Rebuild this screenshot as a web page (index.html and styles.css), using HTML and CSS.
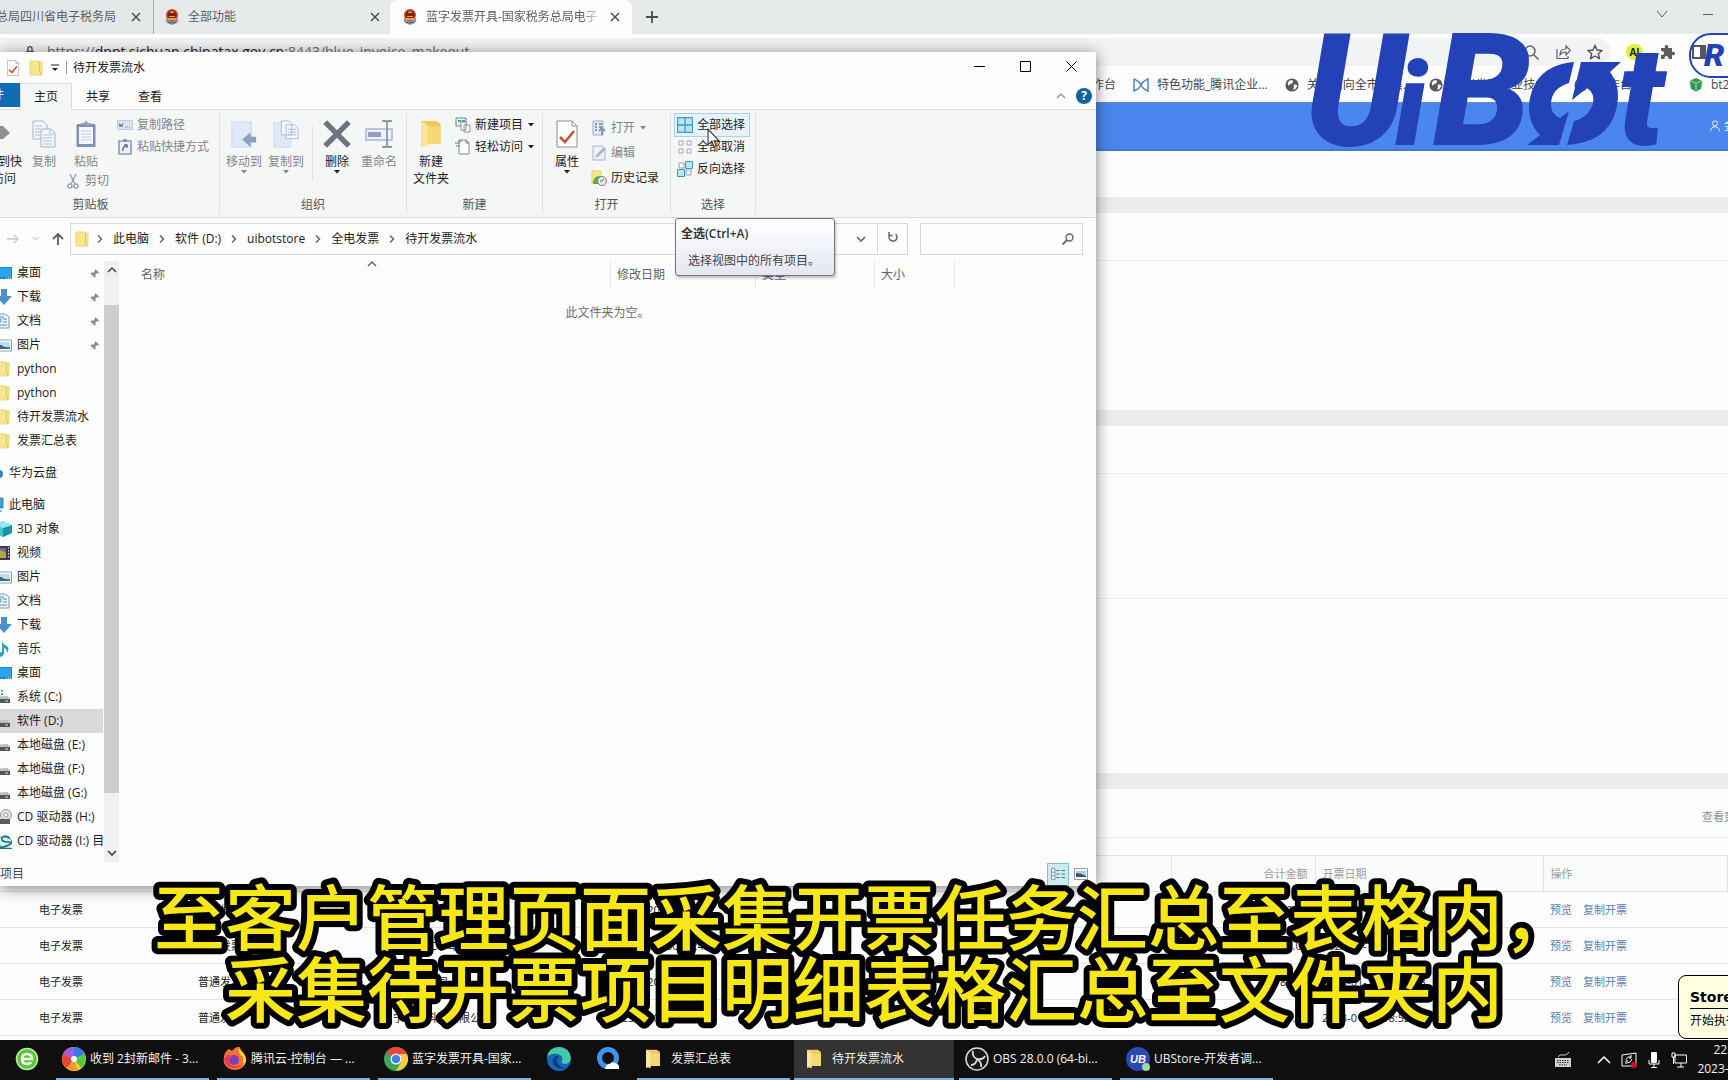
FILE: index.html
```html
<!DOCTYPE html>
<html lang="zh-CN">
<head>
  <meta charset="UTF-8" />
  <meta name="viewport" content="width=device-width, initial-scale=1.0"/>
  <title>蓝字发票开具</title>
  <link rel="stylesheet" href="styles.css">
</head>
<body>

  <!-- shared icons -->
  <svg class="sprite" aria-hidden="true">
    <symbol id="x" viewBox="0 0 10 10"><path d="M1 1l8 8M9 1L1 9" fill="none" stroke="currentColor" stroke-width="1.4"/></symbol>
    <symbol id="chev-r" viewBox="0 0 10 10"><path d="M3 1.5L6.5 5L3 8.500" fill="none" stroke="currentColor" stroke-width="1.5"/></symbol>
    <symbol id="chev-d" viewBox="0 0 10 10"><path d="M1 3l4 4l4-4" fill="none" stroke="currentColor" stroke-width="1.700"/></symbol>
    <symbol id="chev-u" viewBox="0 0 10 10"><path d="M1 7l4-4l4 4" fill="none" stroke="currentColor" stroke-width="1.500"/></symbol>
    <symbol id="tri" viewBox="0 0 6 4"><path d="M0 0h6L3 3.500z" fill="currentColor"/></symbol>
    <symbol id="emblem" viewBox="0 0 16 18">
      <path d="M2 10q-1 3 1 5l5 2l5-2q2-2 1-5z" fill="#8a97b0"/>
      <circle cx="8" cy="7" r="6" fill="#c9442c"/><circle cx="8" cy="7" r="4.500" fill="#7e1f1a"/>
      <path d="M3 10h10l-1 2H4zM5 8h6v1H5zM6 4l2-1l2 1v1H6z" fill="#f0a13c"/>
      <path d="M4 14l4 1l4-1" stroke="#4a5878" fill="none"/>
    </symbol>
    <symbol id="folder" viewBox="0 0 14 16">
      <path d="M1 1h9v1h3v13H1z" fill="#f8e58f" stroke="#e6cf72" stroke-width=".8"/>
      <path d="M10.500 2v9l1.500 4" fill="none" stroke="#e0c45c" stroke-width="1"/>
    </symbol>
    <symbol id="folder-open" viewBox="0 0 20 26">
      <path d="M1 1h14l4 3v18H6L1 25z" fill="#efc95b"/><path d="M1 1l6 4v20l-6-2z" fill="#fbe69a"/><path d="M7 6h12v16H7z" fill="#f6d977"/>
    </symbol>
    <symbol id="pages" viewBox="0 0 24 28">
      <g fill="#f1f5fc" stroke="#a4b3d2"><path d="M1 1h10l4 4v14H1z"/><path d="M9 9h10l4 4v14H9z"/></g>
      <path d="M3 6h7M3 9h5M3 12h5M3 15h5M11 15h9M11 18h9M11 21h9M11 24h9M18 9v5h5" stroke="#b6c3de" fill="none"/>
    </symbol>
    <symbol id="clip" viewBox="0 0 22 28">
      <rect x="1.500" y="4" width="19" height="23" rx="1" fill="#8190b6"/><path d="M4 7h14v17H4z" fill="#f4f7fd"/>
      <path d="M6 5h10V3h-3q-2-4-4 0H6z" fill="#9aa5bd"/><path d="M6 11h10M6 14h10M6 17h10M6 20h10" stroke="#c0cbe2"/>
    </symbol>
    <symbol id="scissors" viewBox="0 0 12 16">
      <path d="M3 1l5 10M9 1L4 11" stroke="#98a2b2" stroke-width="1.500"/><circle cx="3" cy="13" r="2" fill="none" stroke="#98a2b2" stroke-width="1.500"/><circle cx="9" cy="13" r="2" fill="none" stroke="#98a2b2" stroke-width="1.500"/>
    </symbol>
    <symbol id="path" viewBox="0 0 16 12"><path d="M.5 1.500h15v9H.5z" fill="#dde4f1" stroke="#c0c9da"/><path d="M2 4l1 4l1-3l1 3l1-4M8 8h1M10 8h1M12 8h1" fill="none" stroke="#7684a0"/></symbol>
    <symbol id="shortcut" viewBox="0 0 14 16"><path d="M1 2h12v13H1z" fill="#edf2fa" stroke="#8a98b6" stroke-width="1.600"/><path d="M5 0h4v3H5z" fill="#8a98b6"/><path d="M5 12q-1-4 3-5M6 6h3v3" stroke="#5e7398" stroke-width="1.500" fill="none"/></symbol>
    <symbol id="move" viewBox="0 0 28 30"><path d="M1 2h21v27H1z" fill="#dfe9fa" stroke="#cbd8ef"/><path d="M12 21l9-8v5h6v6h-6v5z" fill="#8f9fc0"/></symbol>
    <symbol id="copyto" viewBox="0 0 28 30"><path d="M1 3h18v26H1z" fill="#dfe9fa" stroke="#cbd8ef"/><path d="M9 1h8l3 3v12H9zM14 5h9l4 4v11H14z" fill="#f3f7fe" stroke="#a9b8d6"/><path d="M16 10h9M16 13h9M16 16h9" stroke="#a9b8d6"/></symbol>
    <symbol id="del" viewBox="0 0 26 26"><path d="M2 2l22 22M24 2L2 24" stroke="#6c7482" stroke-width="5"/></symbol>
    <symbol id="rename" viewBox="0 0 28 28"><path d="M1 9h26v11H1z" fill="#eef3fb" stroke="#a9b7d4" stroke-width="1.500"/><path d="M3 12h13v5H3z" fill="#8fa0c2"/><path d="M17 1h4l1 2l1-2h4M22 2v24M17 27h4l1-2l1 2h4" fill="none" stroke="#8d98ab" stroke-width="1.800"/></symbol>
    <symbol id="newitem" viewBox="0 0 16 16"><path d="M1 1h10v8H1z" fill="#e8f4f2" stroke="#5b8f8d"/><path d="M3 3h3v2H3zM7 3h3v2H7z" fill="#5b8f8d"/><path d="M6 5h5v8H6zM9 8h6v7H9z" fill="#fff" stroke="#8a8f98"/></symbol>
    <symbol id="easy" viewBox="0 0 16 16"><path d="M4 1h7l3 3v11H4z" fill="#fbfcfe" stroke="#848b96"/><path d="M0 4h5M1 7h4M3 2h4M11 1v3h3" stroke="#5678a2" fill="none"/></symbol>
    <symbol id="props" viewBox="0 0 22 28"><path d="M1 1h15l5 5v21H1z" fill="#fff" stroke="#8b8f96"/><path d="M16 1v5h5" fill="none" stroke="#8b8f96"/><path d="M4 17l5 5l9-11" stroke="#c6553b" stroke-width="2.600" fill="none"/></symbol>
    <symbol id="openi" viewBox="0 0 14 16"><path d="M1 1h10v14H1z" fill="#e3eaf6" stroke="#9aa9c6"/><path d="M3 4h2M3 7h2M3 10h2M7 4h3M7 7h3" stroke="#8797b8" stroke-width="2"/><path d="M10 15V9M7 11l3-3l3 3" stroke="#8797b8" fill="none" stroke-width="2"/></symbol>
    <symbol id="edit" viewBox="0 0 14 16"><path d="M1 1h9l3 3v11H1z" fill="#eef2f9" stroke="#a8b3c9"/><path d="M3 13l2-4l7-7l2 2l-7 7z" fill="#a5b4d1"/></symbol>
    <symbol id="history" viewBox="0 0 16 16"><path d="M1 1h9v12H1z" fill="#f4e98a" stroke="#e3d35c"/><path d="M2 14q0-9 8-8v8z" fill="#5aab4a"/><circle cx="11" cy="11" r="4.500" fill="#e6e9e6" stroke="#7b827c"/><path d="M11 11l2-2M11 11h-2" fill="none" stroke="#666"/></symbol>
    <symbol id="selall" viewBox="0 0 16 16"><path d="M.5.5h15v15H.5zM8 0v16M0 8h16" fill="#b8e6f7" stroke="#4e94bd" stroke-width="1.300"/></symbol>
    <symbol id="selnone" viewBox="0 0 16 16"><path d="M2 2h4v4H2zM10 2h4v4h-4zM2 10h4v4H2zM10 10h4v4h-4z" fill="#fff" stroke="#a3a8ad"/></symbol>
    <symbol id="selinv" viewBox="0 0 16 16"><path d="M2 2h5v5H2zM9 9h5v5H9z" fill="#fff" stroke="#8fa2b0"/><path d="M8.500.5h7v7h-7zM.5 8.500h7v7h-7z" fill="#b8e6f7" stroke="#4e94bd"/></symbol>
    <symbol id="desk" viewBox="0 0 18 16"><path d="M0 2h18v12H0z" fill="#1d8bd0"/><path d="M1 3h16v9H1z" fill="#29a5ee"/><path d="M12 13h1M14 13h1M16 13h1" stroke="#fff"/></symbol>
    <symbol id="down" viewBox="0 0 18 16"><path d="M7 0h6v7h5l-8 9l-8-9h5z" fill="#4a90cc"/></symbol>
    <symbol id="doc" viewBox="0 0 18 16"><path d="M1 1h10l4 3v11H1z" fill="#f5fafd" stroke="#7897ad"/><path d="M3 6h4v3H3zM9 6h4M9 9h4M3 12h10M6 4h4" stroke="#3f8fb5" fill="none"/></symbol>
    <symbol id="pic" viewBox="0 0 18 16"><path d="M.5 3h17v11H.5z" fill="#fff" stroke="#8aa0b2"/><path d="M2 5h14v7H2z" fill="#b9dcf2"/><path d="M2 8q4-1 7 1t7 1v2H2z" fill="#41667a"/></symbol>
    <symbol id="cube" viewBox="0 0 18 16"><path d="M0 4l9-4l9 4v8l-9 4l-9-4z" fill="#3ec6d2"/><path d="M9 7l9-3v8l-9 4z" fill="#1797a6"/><path d="M0 4l9-4l9 4l-9 3z" fill="#9be6ea"/></symbol>
    <symbol id="film" viewBox="0 0 18 16"><path d="M0 1h16v14H0z" fill="#3c3b48"/><path d="M1 3h11v10H1z" fill="#69689e"/><path d="M2 9l5-4l5 3v5H2z" fill="#b0a84e"/><path d="M14.500 2v12" stroke="#ddd" stroke-dasharray="1.500"/></symbol>
    <symbol id="music" viewBox="0 0 18 16"><path d="M8 0q1 4 5 5q3 3 0 7q0-4-3-5v6q-1 3-5 3q-3-1-1-4q2-1 4-1z" fill="#2d9fc4"/></symbol>
    <symbol id="drive" viewBox="0 0 18 16"><path d="M0 8l14-1l2 3v4H0z" fill="#bdbdbd"/><path d="M0 10h16v4H0z" fill="#54565a"/><path d="M11 12h3" stroke="#cfe8cf"/></symbol>
    <symbol id="sysdrive" viewBox="0 0 18 16"><path d="M4 1h2v2H4zM7 1h2v2H7zM4 4h2v2H4zM7 4h2v2H7z" fill="#47b7b0"/><path d="M0 8l14-1l2 3v4H0z" fill="#bdbdbd"/><path d="M0 10h16v4H0z" fill="#54565a"/><path d="M11 12h3" stroke="#b6e8b6"/></symbol>
    <symbol id="cd" viewBox="0 0 18 16"><circle cx="12" cy="6" r="5.500" fill="#e0e0e0" stroke="#9b9b9b"/><circle cx="12" cy="6" r="2" fill="#fff" stroke="#9b9b9b"/><path d="M0 10h16v5H0z" fill="#5a5c60"/></symbol>
    <symbol id="cd2" viewBox="0 0 18 16"><ellipse cx="9" cy="9" rx="9" ry="5" fill="#cfeeed" stroke="#398e95"/><path d="M16 5q-7-4-8 0t6 4t-2 4t-6-1M0 15.500h18" fill="none" stroke="#1b7480" stroke-width="1.600"/></symbol>
    <symbol id="pc" viewBox="0 0 10 16"><path d="M0 1h9v10H0z" fill="#35a4e4" stroke="#5a7890"/><path d="M0 14h8" stroke="#5aa8d8" stroke-width="1.500"/></symbol>
    <symbol id="cloud" viewBox="0 0 10 16"><circle cx="5" cy="9" r="4" fill="#2f7fd0"/></symbol>
    <symbol id="pin" viewBox="0 0 12 12"><path d="M7 1l4 4l-1 1l-1-.5l-2 2l.3 2L6 10.500L4 8.200L.8 11.300L3.600 7.800L1.400 6l1-1.200l2 .3l2-2z" fill="#8b9097"/></symbol>
    <symbol id="globe" viewBox="0 0 16 16"><circle cx="8" cy="8" r="7.500" fill="#55585c"/><path d="M3 5q4-4 6-2q1 2-1 3t-4 3zM10 7q4 0 4 2q-2 5-5 4q2-2 1-4z" fill="#f4f4f4"/></symbol>
  </svg>

  <div class="desktop">

    <!-- browser -->
    <main class="browser">
      <div class="tabs">
        <div class="tab tab-first"><span>总局四川省电子税务局</span><svg class="i10"><use href="#x"/></svg></div>
        <div class="tab tab-mid"><svg class="emblem"><use href="#emblem"/></svg><span>全部功能</span><svg class="i10"><use href="#x"/></svg></div>
        <div class="tab tab-on"><svg class="emblem"><use href="#emblem"/></svg><span class="fade">蓝字发票开具-国家税务总局电子</span><svg class="i10"><use href="#x"/></svg></div>
        <button class="newtab" aria-label="新标签页"><svg viewBox="0 0 12 12"><path d="M6 0v12M0 6h12" stroke="#4a4d50" stroke-width="1.800"/></svg></button>
        <div class="wincaps">
          <svg class="i12" viewBox="0 0 12 12"><path d="M1 3l5 6l5-6" fill="none" stroke="currentColor"/></svg>
          <svg class="i12" viewBox="0 0 12 12"><path d="M1 6.500h10" stroke="currentColor"/></svg>
        </div>
      </div>
      <div class="toolbar">
        <div class="omnibox">
          <svg class="i14" viewBox="0 0 14 14"><path d="M3 6h8v8H3z" fill="#55585c"/><path d="M5 6V3q2-3 4 0v3" fill="none" stroke="#55585c" stroke-width="1.500"/></svg>
          <span class="url">https://<b>dppt.sichuan.chinatax.gov.cn</b>:8443/blue_invoice_makeout</span>
          <div class="omni-icons">
            <svg viewBox="0 0 16 16"><circle cx="7" cy="7" r="5" fill="none" stroke="#5f6368" stroke-width="1.500"/><path d="M10.500 10.500l5 5" stroke="#5f6368" stroke-width="1.500"/></svg>
            <svg viewBox="0 0 16 16"><path d="M2 5v9.500h11V12M5 11q0-6 6-6V2l4.500 4.500L11 11V8q-4 0-6 3z" fill="none" stroke="#5f6368" stroke-width="1.200"/></svg>
            <svg viewBox="0 0 16 16"><path d="M8 1.500l2 4.500l5 .5l-3.700 3.200l1.100 4.800L8 12l-4.400 2.500l1.100-4.800L1 6.500L6 6z" fill="none" stroke="#4e5155" stroke-width="1.400"/></svg>
          </div>
        </div>
        <div class="ext">
          <span class="ai">AI</span>
          <svg viewBox="0 0 16 16"><path d="M2 4h4q-1-3 1.500-3T9 4h4v4q3-1 3 1.500T13 11v4H9.500q0-3-2-3t-2 3H2v-4q3 0 3-2T2 7z" fill="#5a5d61"/></svg>
          <svg viewBox="0 0 16 16"><path d="M2 2h12v12H2z" fill="#fff" stroke="#55585c" stroke-width="2"/><path d="M9 2h5v12H9z" fill="#55585c"/></svg>
        </div>
      </div>
      <div class="bookmarks">
        <a href="#">作台</a>
        <a href="#"><svg class="i16" viewBox="0 0 16 16"><path d="M1 2v12q5-2 7-6t7-6v12q-5-2-7-6t-7-6" fill="none" stroke="#4a86c8" stroke-width="1.500"/></svg>特色功能_腾讯企业...</a>
        <a href="#"><svg class="i14"><use href="#globe"/></svg>关于面向全市征集...</a>
        <a href="#"><svg class="i14"><use href="#globe"/></svg>四川省建筑业技术...</a>
        <a href="#"><svg class="i14"><use href="#globe"/></svg>工作台</a>
        <a href="#" class="last"><svg class="i14" viewBox="0 0 14 16"><path d="M0 3l7-3l7 3l-1 9l-6 4l-6-4z" fill="#2f9a53"/><path d="M0 3l7 3l7-3M7 6v9" stroke="#bfe6c9" fill="none"/></svg>bt2048</a>
      </div>

      <div class="page">
        <div class="page-nav"><svg class="i12" viewBox="0 0 12 14"><circle cx="6" cy="4" r="3" fill="none" stroke="#fff"/><path d="M1 13q0-5 5-5t5 5" fill="none" stroke="#fff"/></svg><span>金先生</span></div>
        <div class="card card-title"></div>
        <div class="card card-short"><div class="card-head"></div></div>
        <div class="card card-tall"><div class="card-head"></div><div class="card-mid"></div></div>
        <div class="card">
          <div class="more"><a href="#">查看更多</a></div>
          <table class="invoices">
            <colgroup><col class="c-kind"><col class="c-type"><col class="c-buyer"><col class="c-no"><col class="c-gap"><col class="c-sum"><col class="c-date"><col></colgroup>
            <thead>
              <tr><th></th><th></th><th></th><th></th><th></th><th class="sum">合计金额</th><th>开票日期</th><th>操作</th></tr>
            </thead>
            <tbody>
              <tr><td>电子发票</td><td>普通发票</td><td>成都某某科技有限公司</td><td>23512000000009</td><td></td><td class="sum">120.00</td><td>2023-01-13 18:53:28</td><td><a href="#">预览</a><a href="#">复制开票</a></td></tr>
              <tr><td>电子发票</td><td>普通发票</td><td>张三李民二手车</td><td>23512000000248</td><td></td><td class="sum">99.00</td><td>2023-01-13 18:53:12</td><td><a href="#">预览</a><a href="#">复制开票</a></td></tr>
              <tr><td>电子发票</td><td>普通发票</td><td>成都商贸公司</td><td>23512000000199</td><td></td><td class="sum">88.00</td><td>2023-01-13 18:52:48</td><td><a href="#">预览</a><a href="#">复制开票</a></td></tr>
              <tr><td>电子发票</td><td>普通发票</td><td>昌宁网络科技有限公司</td><td>23512000000201</td><td></td><td class="sum">19.00</td><td>2023-01-13 18:52:30</td><td><a href="#">预览</a><a href="#">复制开票</a></td></tr>
            </tbody>
          </table>
        </div>
      </div>
    </main>

    <!-- file explorer window -->
    <section class="explorer">
      <div class="titlebar">
        <svg class="i16" viewBox="0 0 22 28"><use href="#props"/></svg>
        <svg class="i16"><use href="#folder"/></svg>
        <svg class="qa" viewBox="0 0 8 8"><path d="M0 1h8" stroke="#222"/><path d="M1 4h6L4 7z" fill="#222"/></svg>
        <i class="bar"></i>
        <span>待开发票流水</span>
        <div class="caps">
          <button aria-label="最小化"><svg viewBox="0 0 11 11"><path d="M0 5.500h11" stroke="#000"/></svg></button>
          <button aria-label="最大化"><svg viewBox="0 0 11 11"><path d="M.5.5h10v10H.5z" fill="none" stroke="#000"/></svg></button>
          <button aria-label="关闭"><svg viewBox="0 0 11 11"><path d="M.5.5l10 10M10.500.5l-10 10" stroke="#000"/></svg></button>
        </div>
      </div>
      <nav class="menu">
        <button class="file"><span>文件</span></button>
        <button class="on">主页</button>
        <button>共享</button>
        <button>查看</button>
        <div class="help"><svg class="i10"><use href="#chev-u"/></svg><button class="q" aria-label="帮助">?</button></div>
      </nav>

      <div class="ribbon">
        <div class="group g-clip">
          <div class="tools">
            <button class="big"><svg class="i28" viewBox="0 0 28 28"><path d="M14 6h5l7 7l-7 6h-5z" fill="#8d9196"/></svg><span>固定到快<br>速访问</span></button>
            <button class="big off"><svg class="i28"><use href="#pages"/></svg><span>复制</span></button>
            <div class="col">
              <button class="big off"><svg class="i28"><use href="#clip"/></svg><span>粘贴</span></button>
              <button class="small off"><svg class="i16"><use href="#scissors"/></svg>剪切</button>
            </div>
            <div class="col pad">
              <button class="small off"><svg class="i16"><use href="#path"/></svg>复制路径</button>
              <button class="small off"><svg class="i16"><use href="#shortcut"/></svg>粘贴快捷方式</button>
            </div>
          </div>
          <div class="caption">剪贴板</div>
        </div>
        <div class="group g-org">
          <div class="tools">
            <button class="big off"><svg class="i28"><use href="#move"/></svg><span>移动到</span><svg class="tri"><use href="#tri"/></svg></button>
            <button class="big off"><svg class="i28"><use href="#copyto"/></svg><span>复制到</span><svg class="tri"><use href="#tri"/></svg></button>
            <i class="split"></i>
            <button class="big"><svg class="i28"><use href="#del"/></svg><span>删除</span><svg class="tri"><use href="#tri"/></svg></button>
            <button class="big off"><svg class="i28"><use href="#rename"/></svg><span>重命名</span></button>
          </div>
          <div class="caption">组织</div>
        </div>
        <div class="group g-new">
          <div class="tools">
            <button class="big"><svg class="i28"><use href="#folder-open"/></svg><span>新建<br>文件夹</span></button>
            <div class="col">
              <button class="small"><svg class="i16"><use href="#newitem"/></svg>新建项目<svg class="tri"><use href="#tri"/></svg></button>
              <button class="small"><svg class="i16"><use href="#easy"/></svg>轻松访问<svg class="tri"><use href="#tri"/></svg></button>
            </div>
          </div>
          <div class="caption">新建</div>
        </div>
        <div class="group g-open">
          <div class="tools">
            <button class="big"><svg class="i28"><use href="#props"/></svg><span>属性</span><svg class="tri"><use href="#tri"/></svg></button>
            <div class="col loose">
              <button class="small off"><svg class="i16"><use href="#openi"/></svg>打开<svg class="tri"><use href="#tri"/></svg></button>
              <button class="small off"><svg class="i16"><use href="#edit"/></svg>编辑</button>
              <button class="small"><svg class="i16"><use href="#history"/></svg>历史记录</button>
            </div>
          </div>
          <div class="caption">打开</div>
        </div>
        <div class="group g-sel">
          <div class="tools">
            <div class="col">
              <button class="small hover"><svg class="i16"><use href="#selall"/></svg>全部选择</button>
              <button class="small"><svg class="i16"><use href="#selnone"/></svg>全部取消</button>
              <button class="small"><svg class="i16"><use href="#selinv"/></svg>反向选择</button>
            </div>
          </div>
          <div class="caption">选择</div>
        </div>
        <svg class="cursor" viewBox="0 0 12 18"><path d="M1 1v14l3.500-3l2 5l2-1l-2-4.500H11z" fill="#fff" stroke="#333"/></svg>
        <div class="tip" role="tooltip"><strong>全选(Ctrl+A)</strong><p>选择视图中的所有项目。</p></div>
      </div>

      <div class="address">
        <div class="arrows">
          <svg class="i14 dim" viewBox="0 0 14 14"><path d="M1 7h11M8 3l4 4l-4 4" fill="none" stroke="currentColor" stroke-width="1.300"/></svg>
          <svg class="caret dim"><use href="#chev-d"/></svg>
          <svg class="i14" viewBox="0 0 14 14"><path d="M7 13V2M2 7l5-5l5 5" fill="none" stroke="#5a5d61" stroke-width="1.800"/></svg>
        </div>
        <div class="crumbs">
          <svg class="i16"><use href="#folder"/></svg>
          <svg class="i10"><use href="#chev-r"/></svg><span>此电脑</span>
          <svg class="i10"><use href="#chev-r"/></svg><span>软件 (D:)</span>
          <svg class="i10"><use href="#chev-r"/></svg><span>uibotstore</span>
          <svg class="i10"><use href="#chev-r"/></svg><span>全电发票</span>
          <svg class="i10"><use href="#chev-r"/></svg><span>待开发票流水</span>
          <svg class="i10 drop"><use href="#chev-d"/></svg>
          <button class="refresh" aria-label="刷新"><svg viewBox="0 0 12 12"><path d="M3 3.500a4 4 0 1 0 5.500-.5M2 1v3.500h3.500" fill="none" stroke="#666" stroke-width="1.500"/></svg></button>
        </div>
        <label class="search"><input type="text" aria-label="搜索"><svg viewBox="0 0 12 12"><circle cx="7.500" cy="4.500" r="3.500" fill="none" stroke="#666" stroke-width="1.400"/><path d="M5 7l-4.500 4.500" stroke="#666" stroke-width="1.800"/></svg></label>
      </div>

      <div class="body">
        <ul class="tree">
          <li><svg><use href="#desk"/></svg>桌面<svg class="pin"><use href="#pin"/></svg></li>
          <li><svg><use href="#down"/></svg>下载<svg class="pin"><use href="#pin"/></svg></li>
          <li><svg><use href="#doc"/></svg>文档<svg class="pin"><use href="#pin"/></svg></li>
          <li><svg><use href="#pic"/></svg>图片<svg class="pin"><use href="#pin"/></svg></li>
          <li><svg><use href="#folder"/></svg>python</li>
          <li><svg><use href="#folder"/></svg>python</li>
          <li><svg><use href="#folder"/></svg>待开发票流水</li>
          <li><svg><use href="#folder"/></svg>发票汇总表</li>
          <li class="root"><svg><use href="#cloud"/></svg>华为云盘</li>
          <li class="root"><svg><use href="#pc"/></svg>此电脑</li>
          <li><svg><use href="#cube"/></svg>3D 对象</li>
          <li><svg><use href="#film"/></svg>视频</li>
          <li><svg><use href="#pic"/></svg>图片</li>
          <li><svg><use href="#doc"/></svg>文档</li>
          <li><svg><use href="#down"/></svg>下载</li>
          <li><svg><use href="#music"/></svg>音乐</li>
          <li><svg><use href="#desk"/></svg>桌面</li>
          <li><svg><use href="#sysdrive"/></svg>系统 (C:)</li>
          <li class="sel"><svg><use href="#drive"/></svg>软件 (D:)</li>
          <li><svg><use href="#drive"/></svg>本地磁盘 (E:)</li>
          <li><svg><use href="#drive"/></svg>本地磁盘 (F:)</li>
          <li><svg><use href="#drive"/></svg>本地磁盘 (G:)</li>
          <li><svg><use href="#cd"/></svg>CD 驱动器 (H:)</li>
          <li><svg><use href="#cd2"/></svg>CD 驱动器 (I:) 目</li>
        </ul>
        <div class="scroll">
          <svg class="i10"><use href="#chev-u"/></svg>
          <div class="thumb"></div>
          <svg class="i10"><use href="#chev-d"/></svg>
        </div>
        <div class="files">
          <div class="cols">
            <span class="name">名称<svg class="i10"><use href="#chev-u"/></svg></span>
            <span class="date">修改日期</span><span class="type">类型</span><span class="size">大小</span>
          </div>
          <p class="empty">此文件夹为空。</p>
        </div>
      </div>
      <div class="status">
        <span>个项目</span>
        <div class="views">
          <button class="on" aria-label="详细信息"><svg viewBox="0 0 16 14"><path d="M.5.5h4v13h-4zM0 5h4M0 9h4" fill="#fff" stroke="#6a8794"/><path d="M6 3h4M12 3h4M6 7h4M12 7h4M6 11h4M12 11h4" stroke="#47616e"/></svg></button>
          <button aria-label="大图标"><svg viewBox="0 0 14 12"><path d="M.5.5h13v11H.5z" fill="#fff" stroke="#8a9aa6"/><path d="M2 3h10v6H2z" fill="#a9cfe4"/><path d="M2 5q5 0 10 3v1H2z" fill="#3c5664"/></svg></button>
        </div>
      </div>
    </section>

    <!-- watermark -->
    <svg class="logo" viewBox="0 0 428 135" role="img" aria-label="UiBot">
      <text class="mark" y="125"><tspan x="5">U</tspan><tspan class="mark-i" x="95">i</tspan><tspan x="133">B</tspan><tspan class="mark-t" x="318">t</tspan></text>
      <path d="M274 42Q248 44 236 62Q226 80 230 98Q234 110 240 115L227 125H259L269 91L260 98Q250 94 251 83Q252 68 269 63z"/>
      <path d="M281 42H321L310 52Q322 68 316 90Q308 122 267 125L274 101Q288 98 293 84Q295 73 287 68L272 80z"/>
      <rect x="390" y="14" width="64" height="43" rx="21" fill="none" stroke="#2442b8" stroke-width="2"/>
      <text class="reg" x="404" y="46">R</text>
    </svg>
    <svg class="subtitle">
      <text x="50%" y="72">至客户管理页面采集开票任务汇总至表格内，</text>
      <text x="50%" y="144">采集待开票项目明细表格汇总至文件夹内</text>
    </svg>
    <aside class="balloon"><strong>Store</strong><p>开始执行</p></aside>

    <footer class="taskbar">
      <button class="app icon first"><svg viewBox="0 0 24 24"><circle cx="12" cy="12" r="10.500" fill="#62c343" stroke="#b6efa0" stroke-width="1.500"/><path d="M7 12h10q0-5-5-5t-5 5q0 5 5 5q3 0 4-2" fill="none" stroke="#f0ffe8" stroke-width="2.500"/></svg></button>
      <button class="app run"><svg viewBox="0 0 24 24"><circle cx="12" cy="12" r="12" fill="#f5d631"/><path d="M12 0a12 12 0 0 1 11 7L12 12z" fill="#3f77e8"/><path d="M12 0Q4 0 1 7l11 5z" fill="#a45be0"/><path d="M1 7q-3 9 4 14l7-9z" fill="#e8423c"/><path d="M23 7q3 8-4 14l-7-9z" fill="#52c746"/><path d="M5 21q6 5 11 2l-4-11z" fill="#f49a2c"/><circle cx="12" cy="12" r="3" fill="#fff"/></svg>收到 2封新邮件 - 3...</button>
      <button class="app run"><svg viewBox="0 0 24 24"><path d="M2 6q3-4 4-4l3 2q4-5 8-4q0 3 3 5q4 5 3 10q-3 8-11 8T1 16q-1-5 1-10z" fill="#f5722e"/><path d="M16 1q-2 5 4 9q1 6-4 9q6 0 7-5q0-6-4-9z" fill="#ffd23e"/><circle cx="11" cy="13" r="5" fill="#7b3fc0"/><path d="M1 12q2 10 11 9q8 0 9-7q-3 6-9 5q-7 0-6-7q2-2 4-1q-2-4-6-3z" fill="#e63a55"/></svg>腾讯云-控制台 — ...</button>
      <button class="app run"><svg viewBox="0 0 24 24"><circle cx="12" cy="12" r="12" fill="#3aa757"/><path d="M12 12L2 5.500A12 12 0 0 1 23 7z" fill="#e8453c"/><path d="M12 24l5-9l-1-8h7a12 12 0 0 1-11 17z" fill="#f7cb3f"/><circle cx="12" cy="12" r="5.500" fill="#fff"/><circle cx="12" cy="12" r="4.300" fill="#3f7de8"/></svg>蓝字发票开具-国家...</button>
      <button class="app icon"><svg viewBox="0 0 24 24"><circle cx="12" cy="12" r="12" fill="#1668b8"/><path d="M0 10Q2 0 12 0t12 11q-1 6-7 6q-3-1-2-3q2-5-4-7Q4 6 0 10z" fill="#41c9a8"/><path d="M9 9q-6 3-2 9q4 5 11 3q-6-1-8-6q-1-3 2-6z" fill="#0d3d88"/></svg></button>
      <button class="app icon"><svg viewBox="0 0 24 24"><circle cx="12" cy="11" r="8.500" fill="none" stroke="#3a96e8" stroke-width="5"/><path d="M9 22q1-5 5-5q1-3 5-1q5 1 4 6z" fill="#fff"/></svg></button>
      <button class="app run dir"><svg class="f"><use href="#folder-open"/></svg>发票汇总表</button>
      <button class="app run dir now"><svg class="f"><use href="#folder-open"/></svg>待开发票流水</button>
      <button class="app run"><svg viewBox="0 0 24 24"><circle cx="12" cy="12" r="11" fill="#17181a" stroke="#dadada" stroke-width="1.500"/><path d="M8 4q-1 6 4 8q6 1 8-3M12 12q-1 6-6 6M12 12q5 3 4 8" fill="none" stroke="#dadada" stroke-width="1.800"/></svg>OBS 28.0.0 (64-bi...</button>
      <button class="app run"><svg viewBox="0 0 24 24"><circle cx="12" cy="12" r="12" fill="#2b49b4"/><text class="ub" x="4" y="16">UB</text><circle cx="20" cy="20" r="4" fill="#9fd8a0"/></svg>UBStore-开发者调...</button>
      <div class="tray">
        <svg class="kb" viewBox="0 0 16 16"><path d="M0 6h16v9H0z" fill="#d0d0d0"/><path d="M2 8.500h12M2 10.500h12M4 12.800h8" stroke="#333" stroke-dasharray="1.500 1"/><path d="M3 5q1-3 5-2t6-3" fill="none" stroke="#d0d0d0"/></svg>
        <svg viewBox="0 0 16 16"><path d="M2 11l6-6l6 6" fill="none" stroke="#fff" stroke-width="1.500"/></svg>
        <svg viewBox="0 0 16 16"><path d="M1 3l14-2v13l-14 0z" fill="none" stroke="#fff"/><path d="M5 8q1-4 5-3M11 7q-1 4-5 4M10 3v3H8M5 12V9h2" fill="none" stroke="#fff"/><circle cx="13" cy="13" r="3" fill="#c9152c"/></svg>
        <svg viewBox="0 0 16 16"><rect x="5" y="0" width="6" height="11" rx="1" fill="#fff"/><path d="M3 8v4h10V8M8 12v3M5 15.500h6" fill="none" stroke="#fff"/></svg>
        <svg viewBox="0 0 16 16"><path d="M4 3h11.500v8H4zM10 11v4M6 15h7M1 1h3v4H1zM2.500 5v7" fill="none" stroke="#fff"/></svg>
      </div>
      <div class="clock">22:17<br>2023-01-13</div>
    </footer>
  </div>

</body>
</html>
```
FILE: styles.css
```css
* {
  box-sizing: border-box;
}

body {
  margin: 0;
  font-family: "Open Sans", "Noto Sans CJK SC", sans-serif;
  font-size: 12px;
  line-height: 16px;
  color: #222;
  overflow: hidden;
}

button {
  border: 0;
  padding: 0;
  margin: 0;
  background: none;
  font: inherit;
  color: inherit;
}

a {
  color: inherit;
  text-decoration: none;
}

p {
  margin: 0;
}

svg {
  flex: none;
}

.sprite {
  display: none;
}

.i10 { width: 10px; height: 10px; }
.i12 { width: 12px; height: 12px; }
.i14 { width: 14px; height: 14px; }
.i16 { width: 16px; height: 16px; }
.i28 { width: 28px; height: 28px; }

.desktop {
  position: relative;
  display: flex;
  flex-direction: column;
  height: 100vh;
  overflow: hidden;
  white-space: nowrap;
}

/* browser */
.browser {
  flex: 1;
  min-height: 0;
  overflow: hidden;
  background: #fdfdfd;
}

.tabs {
  display: flex;
  height: 34px;
  background: #e7eaeb;
  color: #5c6063;
}

.tab {
  display: flex;
  align-items: center;
  gap: 8px;
  padding: 0 10px;
}

.tab > :last-child {
  margin-left: auto;
  color: #45484b;
}

.tab-first {
  width: 158px;
  margin-left: -4px;
  padding: 0 12px 0 0;
  border-right: 1px solid #a9adb0;
  background: #e4e7e8;
}

.tab-mid {
  width: 236px;
}

.tab-on {
  width: 242px;
  padding: 0 12px;
  background: #fdfdfd;
  border-radius: 8px 8px 0 0;
}

.emblem {
  width: 16px;
  height: 18px;
}

.fade {
  flex: 1;
  overflow: hidden;
  -webkit-mask-image: linear-gradient(to right, #000 88%, transparent);
}

.newtab {
  width: 12px;
  margin: 0 14px;
}

.newtab svg {
  display: block;
  width: 12px;
  height: 12px;
}

.wincaps {
  display: flex;
  gap: 34px;
  margin-left: auto;
  padding: 8px 14px 0 0;
}

.toolbar {
  display: flex;
  height: 36px;
  padding: 4px 0;
}

.omnibox {
  display: flex;
  flex: 1;
  align-items: center;
  gap: 10px;
  padding: 0 8px 0 23px;
  border-radius: 0 14px 14px 0;
  background: #f1f3f4;
}

.url {
  font-size: 14px;
  color: #6b6f73;
}

.url b {
  font-weight: 400;
  color: #222;
}

.omni-icons {
  display: flex;
  gap: 16px;
  margin-left: auto;
}

.omni-icons svg,
.ext svg {
  width: 16px;
  height: 16px;
}

.ext {
  display: flex;
  align-items: center;
  gap: 16px;
  padding: 0 21px 0 15px;
}

.ai {
  width: 17px;
  border-radius: 9px;
  background: #e6ec3a;
  color: #222;
  font-size: 10px;
  font-weight: 700;
  text-align: center;
}

.bookmarks {
  display: flex;
  align-items: center;
  gap: 17px;
  height: 32px;
  padding: 0 0 2px calc(100vw - 636px);
  color: #45484b;
}

.bookmarks a {
  display: flex;
  align-items: center;
  gap: 8px;
}

.bookmarks .last {
  position: absolute;
  left: calc(100vw - 39px);
}

/* tax page */
.page-nav {
  display: flex;
  align-items: center;
  justify-content: flex-end;
  gap: 3px;
  height: 49px;
  border-top: 1px solid #6d8cc4;
  border-bottom: 2px solid #4477d6;
  background: #4a86ee;
  color: #fff;
}

.page-nav span {
  width: 4px;
  overflow: hidden;
}

.card {
  border-bottom: 16px solid #ececec;
}

.card-title { height: 62px; }
.card-short { height: 213px; }
.card-tall { height: 363px; }
.card:last-child { border: 0; }

.card-head {
  height: 48px;
  border-bottom: 1px solid #eee;
}

.card-mid {
  height: 125px;
  border-bottom: 1px solid #eee;
}

.more {
  height: 49px;
  margin-bottom: 17px;
  border-bottom: 1px solid #eee;
  padding: 20px 0 0 calc(100vw - 26px);
  font-size: 11px;
  color: #8d9094;
}

.invoices {
  width: 100%;
  border-collapse: collapse;
  table-layout: fixed;
  font-size: 11px;
}

.c-kind { width: 191px; }
.c-type { width: 184px; }
.c-buyer { width: 240px; }
.c-no { width: 200px; }
.c-gap { width: 356px; }
.c-sum { width: 144px; }
.c-date { width: 228px; }

.invoices th,
.invoices td {
  height: 36px;
  padding: 0 7px;
  border-bottom: 1px solid #e1e3e5;
  font-weight: 400;
  text-align: left;
}

.invoices th {
  border-top: 1px solid #e1e3e5;
  border-right: 1px solid #e1e3e5;
  background: #fafbfb;
  color: #9a9da0;
}

.invoices td:first-child {
  padding-left: 39px;
}

.invoices .sum {
  text-align: right;
}

.invoices a {
  margin-right: 11px;
  color: #5b7fb4;
}

/* explorer */
.explorer {
  position: absolute;
  top: 52px;
  left: 0;
  width: calc(100vw - 632px);
  background: #fdfdfd;
  box-shadow: 0 2px 14px rgba(0, 0, 0, 0.5);
  color: #1c1c1c;
}

.titlebar {
  display: flex;
  align-items: center;
  gap: 7px;
  height: 31px;
  padding-left: 5px;
}

.qa {
  width: 8px;
  height: 8px;
}

.bar {
  width: 1px;
  height: 13px;
  background: #999;
}

.titlebar span {
  margin-left: -1px;
}

.caps {
  display: flex;
  margin-left: auto;
  padding-right: 2px;
}

.caps button {
  width: 46px;
  height: 30px;
}

.caps svg {
  width: 11px;
  height: 11px;
}

.menu {
  display: flex;
  height: 27px;
  border-bottom: 1px solid #dadbdc;
}

.menu > button {
  width: 52px;
  height: 27px;
}

.menu > .file {
  display: flex;
  justify-content: flex-end;
  align-items: center;
  width: 20px;
  height: 24px;
  padding-right: 16px;
  overflow: hidden;
  background: #0f6cb5;
  color: #fff;
}

.menu .on {
  border: 1px solid #dadbdc;
  border-bottom: 0;
  background: #f5f6f7;
}

.help {
  display: flex;
  align-items: center;
  gap: 10px;
  margin-left: auto;
  padding-right: 4px;
  color: #999;
}

.q {
  width: 16px;
  height: 16px;
  border-radius: 8px;
  background: #14649c;
  color: #fff;
  font-weight: 700;
}

.ribbon {
  position: relative;
  display: flex;
  height: 108px;
  padding: 3px 0;
  border-bottom: 1px solid #dadbdc;
  background: #f5f6f6;
}

.group {
  display: flex;
  flex-direction: column;
  border-right: 1px solid #e0e2e3;
}

.tools {
  display: flex;
  flex: 1;
  padding-top: 1px;
}

.caption {
  height: 17px;
  color: #555;
  text-align: center;
}

.g-clip { width: 258px; margin-left: -38px; }
.g-clip .tools { padding-left: 11px; }
.g-org { width: 187px; }
.g-org .tools { padding-left: 3px; }
.g-new { width: 136px; }
.g-open { width: 128px; }
.g-sel { width: 85px; }
.g-sel .tools { padding-left: 4px; }

.big {
  display: flex;
  flex-direction: column;
  align-items: center;
  width: 42px;
  padding-top: 6px;
  line-height: 17px;
}

.big span {
  margin-top: 5px;
}

.g-clip .big:first-child { width: 50px; }
.g-clip .col .big { width: 42px; }
.g-new .big,
.g-open .big { width: 48px; }

.tri {
  width: 6px;
  height: 4px;
}

.off {
  color: #83868a;
}

.col {
  display: flex;
  flex-direction: column;
  align-items: flex-start;
}

.pad {
  padding-left: 8px;
}

.small {
  display: flex;
  align-items: center;
  gap: 4px;
  height: 22px;
}

.small .tri {
  margin-left: 1px;
}

.loose {
  padding-top: 1px;
}

.loose .small {
  height: 25px;
}

.hover {
  width: 74px;
  padding-left: 2px;
  outline: 1px solid #a9cfec;
  background: #e6f1fa;
}

.g-sel .small {
  padding-left: 2px;
}

.split {
  width: 1px;
  height: 54px;
  margin: 12px 3px 0 5px;
  background: #e0e2e3;
}

.cursor {
  position: absolute;
  left: 707px;
  top: 18px;
  width: 13px;
  height: 20px;
}

.tip {
  position: absolute;
  z-index: 2;
  left: 675px;
  top: 108px;
  width: 160px;
  height: 58px;
  padding: 7px 5px;
  border: 1px solid #767676;
  border-radius: 3px;
  background: linear-gradient(#fff, #e4e7f2);
  box-shadow: 1px 2px 3px rgba(0, 0, 0, 0.25);
  color: #444;
}

.tip strong {
  color: #333;
  font-weight: 600;
}

.tip p {
  margin: 11px 0 0 7px;
}

.address {
  display: flex;
  align-items: center;
  height: 43px;
  padding: 0 13px 2px 0;
}

.arrows {
  display: flex;
  align-items: center;
  gap: 12px;
  width: 70px;
  padding-left: 6px;
}

.caret {
  width: 7px;
  height: 7px;
}

.dim {
  color: #c9c9c9;
}

.crumbs {
  display: flex;
  flex: 1;
  align-items: center;
  gap: 9px;
  height: 32px;
  margin-right: 12px;
  padding-left: 3px;
  border: 1px solid #d9d9d9;
}

.crumbs .i10 {
  margin: 0 -1px 0 -1px;
  color: #666;
}

.crumbs > .i16 {
  margin-right: -3px;
}

.crumbs .drop {
  margin-left: auto;
}

.refresh {
  width: 30px;
  height: 30px;
  margin-left: 3px;
  border-left: 1px solid #d9d9d9;
}

.refresh svg {
  width: 12px;
  height: 12px;
}

.search {
  display: flex;
  align-items: center;
  width: 163px;
  height: 32px;
  padding-right: 8px;
  border: 1px solid #d9d9d9;
}

.search input {
  flex: 1;
  min-width: 0;
  border: 0;
  outline: none;
  background: none;
}

.search svg {
  width: 12px;
  height: 12px;
}

.body {
  display: flex;
}

.tree {
  width: 104px;
  margin: 0;
  padding: 0 1px 9px 0;
  list-style: none;
  overflow: hidden;
}

.tree li {
  display: flex;
  align-items: center;
  gap: 5px;
  height: 24px;
  margin-left: -6px;
}

.tree li > svg {
  width: 18px;
  height: 16px;
}

.tree .root {
  margin-top: 8px;
}

.tree .root > svg {
  width: 10px;
}

.tree li > .pin {
  width: 11px;
  height: 11px;
  margin: 0 3px 0 auto;
}

.tree .sel {
  background: #d9d9d9;
}

.scroll {
  display: flex;
  flex-direction: column;
  justify-content: space-between;
  align-items: center;
  width: 15px;
  padding: 4px 0;
  background: #f0f0f0;
  color: #444;
}

.thumb {
  width: 15px;
  height: 488px;
  margin-bottom: 26px;
  background: #cdcdcd;
}

.files {
  flex: 1;
}

.cols {
  display: flex;
  height: 28px;
  line-height: 28px;
  color: #5f6368;
}

.cols span {
  padding-left: 6px;
  border-right: 1px solid #e5e5e5;
}

.cols .name {
  position: relative;
  width: 492px;
  padding-left: 22px;
}

.cols .name svg {
  position: absolute;
  left: 248px;
  top: -2px;
}

.date { width: 145px; }
.type { width: 119px; }
.size { width: 80px; }

.empty {
  padding-top: 16px;
  text-align: center;
  color: #6d6d6d;
}

.status {
  display: flex;
  align-items: center;
  height: 24px;
}

.status span {
  margin-left: -12px;
  color: #444;
}

.views {
  display: flex;
  gap: 5px;
  margin-left: auto;
  padding-right: 8px;
}

.views button {
  display: flex;
  align-items: center;
  height: 23px;
}

.views .on {
  padding: 0 3px;
  border: 1px solid #84bccb;
  background: #cfebf2;
}

.views svg {
  width: 14px;
  height: 14px;
}

/* overlays */
.logo {
  position: absolute;
  right: 0;
  top: 20px;
  width: 428px;
  height: 135px;
  fill: #2442b8;
}

.mark {
  font: italic 900 157px Roboto, "Liberation Sans", sans-serif;
}

.mark-i {
  font-size: 116px;
}

.mark-t {
  font-size: 138px;
}

.reg {
  font: italic 900 32px Roboto, "Liberation Sans", sans-serif;
}

.subtitle {
  position: absolute;
  left: 0;
  bottom: 48px;
  width: 100%;
  height: 160px;
  fill: #f7e717;
  stroke: #000;
  stroke-width: 12px;
  stroke-linejoin: round;
  paint-order: stroke fill;
  font: 500 71px "Noto Sans CJK SC", sans-serif;
  text-anchor: middle;
}

.balloon {
  position: absolute;
  left: calc(100vw - 50px);
  bottom: 41px;
  width: 200px;
  height: 64px;
  padding: 12px 11px;
  border: 1px solid #000;
  border-radius: 8px;
  background: #ffffe1;
  color: #000;
}

.balloon strong {
  display: block;
  height: 21px;
  border-bottom: 1px solid #000;
  font: bold 14px/18px "DejaVu Sans", sans-serif;
}

.balloon p {
  padding-top: 4px;
}

.taskbar {
  display: flex;
  height: 40px;
  overflow: hidden;
  background: #0f0f0f;
  color: #f2f2f2;
}

.app {
  display: flex;
  flex: none;
  align-items: center;
  gap: 4px;
  width: 153px;
  margin-right: 8px;
  padding-left: 6px;
  border-bottom: 2px solid transparent;
}

.app svg {
  width: 24px;
  height: 24px;
}

.run {
  border-color: #86b4d6;
}

.icon {
  width: 41px;
  padding-left: 8px;
}

.first {
  width: 48px;
  padding-left: 15px;
}

.dir {
  gap: 8px;
}

.app .f {
  width: 20px;
  height: 20px;
}

.now {
  width: 160px;
  margin: 0 5px 0 -4px;
  padding-left: 10px;
  background: #333;
}

.ub {
  fill: #fff;
  font: italic bold 11px "Liberation Sans", sans-serif;
}

.tray {
  display: flex;
  align-items: center;
  gap: 9px;
  margin-left: auto;
}

.tray svg {
  width: 16px;
  height: 16px;
}

.tray .kb {
  margin-right: 16px;
}

.clock {
  flex: none;
  margin: 0 -32px 0 10px;
  line-height: 19px;
  text-align: center;
}
```
